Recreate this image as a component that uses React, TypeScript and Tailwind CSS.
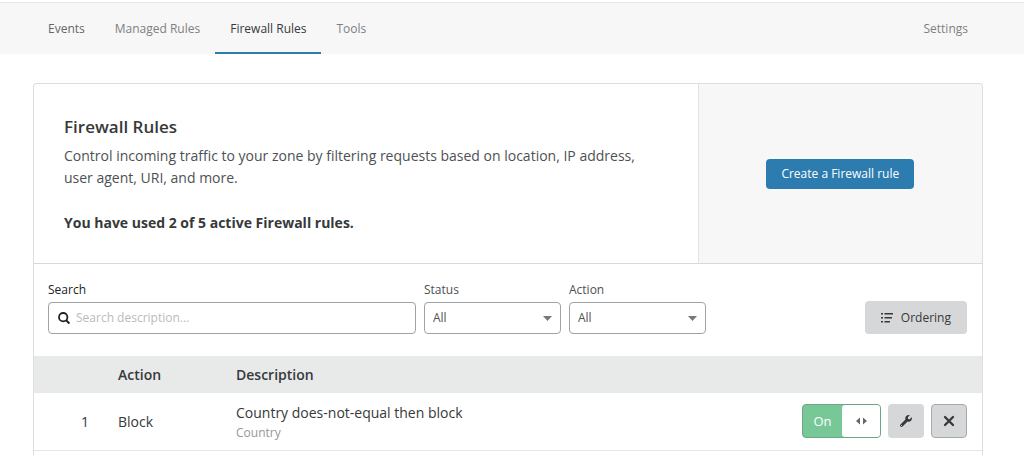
import React, { useState } from "react";
import clsx from "clsx";
import { FaWrench } from "react-icons/fa";

type Tab = { label: string; className: string };

const tabs: Tab[] = [
  { label: "Events", className: "text-[#62676b]" },
  { label: "Managed Rules", className: "text-[#7d8082]" },
  { label: "Firewall Rules", className: "text-[#36393a]" },
  { label: "Tools", className: "text-[#7d8082]" },
];

type Rule = {
  priority: number;
  action: string;
  description: string;
  fields: string;
};

const rules: Rule[] = [
  {
    priority: 1,
    action: "Block",
    description: "Country does-not-equal then block",
    fields: "Country",
  },
];

function SearchIcon() {
  return (
    <svg className="w-3 h-3 flex-shrink-0" viewBox="0 0 12 12" fill="none">
      <circle cx="5.2" cy="5.2" r="4.2" stroke="#222" strokeWidth="1.8" />
      <path d="M8.2 8.2 11.4 11.6" stroke="#222" strokeWidth="2" />
    </svg>
  );
}

function OrderingIcon() {
  return (
    <svg className="w-3 h-3" viewBox="0 0 12 12" fill="#36393a">
      <path d="M0 1h2v1.6H0zM0 5h2v1.6H0zM0 9h2v1.6H0zM3.5 1H12v1.6H3.5zM3.5 5H11v1.6H3.5zM3.5 9H9v1.6H3.5z" />
    </svg>
  );
}

function CloseIcon() {
  return (
    <svg className="w-3 h-3" viewBox="0 0 12 12" fill="none">
      <path
        d="M2 2 10 10M10 2 2 10"
        stroke="#36393a"
        strokeWidth="2.3"
        strokeLinecap="round"
      />
    </svg>
  );
}

function FilterSelect({ id, label }: { id: string; label: string }) {
  return (
    <div className="flex flex-col w-[137px]">
      <label htmlFor={id} className="text-[12px] leading-5 text-[#4d5154]">
        {label}
      </label>
      <div className="relative mt-[2px]">
        <select
          id={id}
          className="appearance-none w-full h-8 pl-2 rounded border border-[#9ea3a8] bg-white text-[12px] text-[#4d5154]"
        >
          <option>All</option>
        </select>
        <svg
          className="absolute right-[9px] top-[14px] w-[9px] h-[5px] pointer-events-none"
          viewBox="0 0 9 5"
          fill="#74797d"
        >
          <path d="M0 0h9L4.5 5z" />
        </svg>
      </div>
    </div>
  );
}

function Toggle() {
  const [on, setOn] = useState(true);

  return (
    <button
      type="button"
      role="switch"
      aria-checked={on}
      aria-label="Rule enabled"
      onClick={() => setOn(!on)}
      className={clsx(
        "flex w-[79px] h-[34px] rounded border text-[13px] text-white",
        on ? "bg-[#77c797] border-[#6aa884]" : "bg-gray-400 border-gray-500"
      )}
    >
      <span className="flex-1 self-center">{on ? "On" : "Off"}</span>
      <span className="flex items-center justify-center w-[38px] h-full rounded-[3px] bg-white">
        <svg className="w-[11px] h-2" viewBox="0 0 11 8" fill="#62676b">
          <path d="M4 0.5v7L0 4zM7 0.5v7L11 4z" />
        </svg>
      </span>
    </button>
  );
}

export default function App() {
  const [active, setActive] = useState("Firewall Rules");

  return (
    <div className="bg-white font-['Open_Sans',sans-serif] text-[#36393a]">
      <header className="mt-[2px] flex justify-between border-t border-[#e6e6e6] bg-[#f7f7f7] pl-[33px] pr-[41px] text-[12px]">
        <nav className="flex">
          {tabs.map((tab) => (
            <a
              key={tab.label}
              href="#"
              onClick={() => setActive(tab.label)}
              className={clsx(
                "h-[51px] px-[15px] pt-4 leading-5 border-b-2",
                tab.className,
                active === tab.label ? "border-[#2c7cb0]" : "border-transparent"
              )}
            >
              {tab.label}
            </a>
          ))}
        </nav>
        <a href="#" className="px-[15px] pt-4 leading-5 text-[#7d8082]">
          Settings
        </a>
      </header>

      <main className="pt-[29px] pl-[33px] pr-[41px]">
        <section className="rounded-t border border-b-0 border-[#dedede] pb-[5px]">
          <div className="flex border-b border-[#d9d9d9]">
            <div className="w-[70%] pt-[30px] pb-[29px] pl-[30px] pr-10">
              <h1 className="text-[17px] leading-[26px] font-semibold">
                Firewall Rules
              </h1>
              <p className="mt-[5px] text-[14px] leading-[22px] text-[#4d5154]">
                Control incoming traffic to your zone by filtering requests
                based on location, IP address, user agent, URI, and more.
              </p>
              <p className="mt-[23px] text-[14px] leading-[22px] font-bold">
                You have used 2 of 5 active Firewall rules.
              </p>
            </div>
            <div className="w-[30%] flex items-center justify-center rounded-tr border-l border-[#e3e3e3] bg-[#f7f7f7]">
              <button
                type="button"
                className="h-[30px] px-[15px] rounded bg-[#2c7cb0] text-[12px] text-white"
              >
                Create a Firewall rule
              </button>
            </div>
          </div>

          <div className="flex items-start gap-2 pl-[14px] pr-[15px] pt-4 pb-[22px]">
            <div className="flex flex-col w-[368px]">
              <label
                htmlFor="search"
                className="text-[12px] leading-5 text-[#222]"
              >
                Search
              </label>
              <div className="mt-[2px] flex items-center gap-[6px] h-8 px-[9px] rounded border border-[#9ea3a8]">
                <SearchIcon />
                <input
                  id="search"
                  type="text"
                  placeholder="Search description..."
                  className="flex-1 min-w-0 text-[12px] outline-none placeholder:text-[#b9bbbd]"
                />
              </div>
            </div>
            <FilterSelect id="status" label="Status" />
            <FilterSelect id="action" label="Action" />
            <button
              type="button"
              className="ml-auto mt-[21px] flex items-center gap-2 h-[33px] px-4 rounded bg-[#d5d7d8] text-[12px]"
            >
              <OrderingIcon />
              Ordering
            </button>
          </div>

          <table className="w-full text-left text-[14px]">
            <thead>
              <tr className="h-[37px] bg-[#e8eaea]">
                <th className="w-[84px]" />
                <th className="w-[118px] font-semibold">Action</th>
                <th className="font-semibold">Description</th>
                <th />
              </tr>
            </thead>
            <tbody>
              {rules.map((rule) => (
                <tr
                  key={rule.priority}
                  className="h-[57px] border-b border-[#e6e6e6]"
                >
                  <td className="pr-[29px] text-right">{rule.priority}</td>
                  <td>{rule.action}</td>
                  <td className="pt-[3px]">
                    <div className="leading-5">{rule.description}</div>
                    <div className="text-[12px] leading-5 text-[#959799]">
                      {rule.fields}
                    </div>
                  </td>
                  <td className="pr-[15px]">
                    <div className="flex justify-end gap-[7px]">
                      <Toggle />
                      <button
                        type="button"
                        aria-label="Edit rule"
                        className="flex items-center justify-center w-9 h-[34px] rounded bg-[#d5d7d8]"
                      >
                        <FaWrench className="w-3 h-3" />
                      </button>
                      <button
                        type="button"
                        aria-label="Delete rule"
                        className="flex items-center justify-center w-9 h-[34px] rounded border border-[#a5abad] bg-[#d5d7d8]"
                      >
                        <CloseIcon />
                      </button>
                    </div>
                  </td>
                </tr>
              ))}
            </tbody>
          </table>
        </section>
      </main>
    </div>
  );
}
